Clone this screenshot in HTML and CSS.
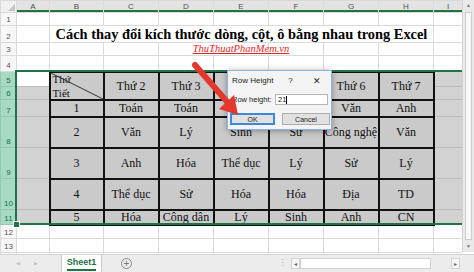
FILE: index.html
```html
<!DOCTYPE html>
<html>

<head>
  <meta charset="UTF-8">
  <meta name="viewport" content="width=device-width, initial-scale=1.0">
  <title>Row Height</title>
  <link rel="stylesheet" href="styles.css">
</head>

<body>
  <div id="excel">
    <div id="main">
      <div id="sheet">
        <table class="grid">
          <colgroup>
            <col class="c-rh">
            <col class="c-a">
            <col class="c-b">
            <col class="c-w" span="6">
            <col class="c-i">
          </colgroup>
          <tr class="r0">
            <th class="corner"><i></i></th>
            <th class="ch">A</th><th class="ch">B</th><th class="ch">C</th><th class="ch">D</th><th class="ch">E</th>
            <th class="ch">F</th><th class="ch">G</th><th class="ch">H</th><th class="ch">I</th>
          </tr>
          <tr class="r1">
            <th class="rh">1</th><td></td><td></td><td></td><td></td><td></td><td></td><td></td><td></td><td></td>
          </tr>
          <tr class="r2">
            <th class="rh">2</th><td></td>
            <td class="title" colspan="7">Cách thay đổi kích thước dòng, cột, ô bằng nhau trong Excel</td>
            <td></td>
          </tr>
          <tr class="r3">
            <th class="rh">3</th><td></td><td></td><td></td><td></td><td></td><td></td><td></td><td></td><td></td>
          </tr>
          <tr class="r4">
            <th class="rh">4</th><td></td><td></td><td></td><td></td><td></td><td></td><td></td><td></td><td></td>
          </tr>
          <tr class="r5">
            <th class="rh sel">5</th>
            <td class="act"></td>
            <td class="t diag" rowspan="2">
              <div class="diag-in">
                <span>Thứ</span><span>Tiết</span>
                <svg class="slash" viewBox="0 0 100 100" preserveAspectRatio="none"><line x1="0" y1="0" x2="100" y2="100" /></svg>
              </div>
            </td>
            <td class="t" rowspan="2">Thứ 2</td>
            <td class="t" rowspan="2">Thứ 3</td>
            <td class="t" rowspan="2"></td>
            <td class="t" rowspan="2"></td>
            <td class="t" rowspan="2">Thứ 6</td>
            <td class="t" rowspan="2">Thứ 7</td>
            <td class="s"></td>
          </tr>
          <tr class="r6">
            <th class="rh sel">6</th><td class="s"></td><td class="s"></td>
          </tr>
          <tr class="r7">
            <th class="rh sel">7</th><td class="s"></td>
            <td class="t">1</td><td class="t">Toán</td><td class="t">Toán</td><td class="t"></td><td class="t"></td><td class="t">Văn</td><td class="t">Anh</td>
            <td class="s"></td>
          </tr>
          <tr class="r8">
            <th class="rh sel">8</th><td class="s"></td>
            <td class="t">2</td><td class="t">Văn</td><td class="t">Lý</td><td class="t">Sinh</td><td class="t">Sử</td><td class="t">Công nghệ</td><td class="t">Văn</td>
            <td class="s"></td>
          </tr>
          <tr class="r9">
            <th class="rh sel">9</th><td class="s"></td>
            <td class="t">3</td><td class="t">Anh</td><td class="t">Hóa</td><td class="t">Thể dục</td><td class="t">Lý</td><td class="t">Sử</td><td class="t">Lý</td>
            <td class="s"></td>
          </tr>
          <tr class="r10">
            <th class="rh sel">10</th><td class="s"></td>
            <td class="t">4</td><td class="t">Thể dục</td><td class="t">Sử</td><td class="t">Hóa</td><td class="t">Hóa</td><td class="t">Địa</td><td class="t">TD</td>
            <td class="s"></td>
          </tr>
          <tr class="r11">
            <th class="rh sel">11</th><td class="s"></td>
            <td class="t">5</td><td class="t">Hóa</td><td class="t">Công dân</td><td class="t">Lý</td><td class="t">Sinh</td><td class="t">Anh</td><td class="t">CN</td>
            <td class="s"></td>
          </tr>
          <tr class="r12">
            <th class="rh">12</th><td></td><td></td><td></td><td></td><td></td><td></td><td></td><td></td><td></td>
          </tr>
          <tr class="r13">
            <th class="rh">13</th><td></td><td></td><td></td><td></td><td></td><td></td><td></td><td></td><td></td>
          </tr>
          <tr class="r14">
            <th class="rh"></th><td></td><td></td><td></td><td></td><td></td><td></td><td></td><td></td><td></td>
          </tr>
        </table>

        <div class="watermark">ThuThuatPhanMem.vn</div>
        <div class="selection"></div>
        <div class="handle"></div>
      </div>

      <div id="vscroll">
        <div class="sb-btn">▲</div>
        <div class="sb-track"><div class="sb-thumb"></div></div>
        <div class="sb-btn">▼</div>
      </div>
    </div>

    <div id="tabbar">
      <span class="nav first">◀</span>
      <span class="nav">▶</span>
      <div class="tab">Sheet1</div>
      <span class="add">+</span>
      <span class="dots">⋮</span>
      <div class="hscroll">
        <span class="h-btn">◂</span>
        <div class="h-thumb"></div>
        <span class="h-rest"></span>
        <span class="h-btn">▸</span>
      </div>
    </div>

    <div class="dialog">
      <div class="dlg-title">
        <span class="dlg-name">Row Height</span>
        <span class="dlg-q">?</span>
        <span class="dlg-x">✕</span>
      </div>
      <div class="dlg-row">
        <label>Row height:</label>
        <div class="dlg-input">21<i class="caret"></i></div>
      </div>
      <div class="dlg-btns">
        <button class="ok">OK</button>
        <button class="cancel">Cancel</button>
      </div>
    </div>

    <svg class="arrow" width="474" height="272" viewBox="0 0 474 272">
      <line x1="195" y1="65" x2="229" y2="104" />
      <polygon points="238,115 219,109 234,95" />
    </svg>
  </div>
</body>

</html>
```

FILE: styles.css
```css
body {
  margin: 0;
  padding: 0;
  overflow: hidden;
  background-color: #fff;
  font-family: 'Liberation Sans', Arial, sans-serif;
}

#excel {
  position: relative;
  width: 474px;
  height: 272px;
  overflow: hidden;
}

#main {
  display: flex;
  height: 254px;
}

#sheet {
  position: relative;
  width: 462px;
  height: 254px;
  overflow: hidden;
}

/* spreadsheet grid */
.grid {
  border-collapse: collapse;
  table-layout: fixed;
  width: 462px;
}

.c-rh { width: 16px; }
.c-a { width: 33px; }
.c-b { width: 54px; }
.c-w { width: 55px; }
.c-i { width: 29px; }

.grid td,
.grid th {
  border: 1px solid #dadada;
  padding: 0;
  overflow: hidden;
  white-space: nowrap;
  line-height: 10px;
}

.r0 { height: 12px; }
.r1 { height: 13px; }
.r2 { height: 17px; }
.r3 { height: 13px; }
.r4 { height: 16px; }
.r5 { height: 15px; }
.r6 { height: 13px; }
.r7 { height: 17px; }
.r8,
.r9,
.r10 { height: 31px; }
.r11 { height: 15px; }
.r12,
.r13,
.r14 { height: 14px; }

.corner {
  position: relative;
  background-color: #f0f0f0;
}

.corner i {
  position: absolute;
  right: 1px;
  bottom: 1px;
  border-left: 7px solid transparent;
  border-bottom: 7px solid #c4c4c4;
}

.ch {
  background-color: #e3e3e3;
  color: #505050;
  font-size: 8px;
  font-weight: normal;
  box-shadow: inset 0 -2px 0 #217346;
  border-color: #cfcfcf;
}

.rh {
  background-color: #f7f7f7;
  color: #555;
  font-size: 8px;
  font-weight: normal;
  vertical-align: bottom;
  text-align: center;
  border-color: #d8d8d8;
}

.rh.sel {
  background-color: #a6dbc2;
  color: #1f6b43;
  border-color: #93c9ae;
}

.grid td.s {
  background-color: #d2d2d2;
  border-color: #bdbdbd;
}

.grid td.act {
  background-color: #fff;
  border-color: #bdbdbd;
}

.title {
  font-family: 'Liberation Serif', 'Times New Roman', serif;
  font-weight: bold;
  font-size: 14.4px;
  text-align: center;
  line-height: 15px;
}

/* the timetable */
.grid td.t {
  border: 2px solid #111;
  background-color: #cacaca;
  text-align: center;
  font-family: 'Liberation Serif', 'Times New Roman', serif;
  font-size: 12px;
  line-height: 12px;
  color: #111;
}

.grid td.diag {
  padding: 0;
}

.diag-in {
  position: relative;
  display: flex;
  flex-direction: column;
  justify-content: space-between;
  align-items: flex-start;
  height: 26px;
  padding-left: 2px;
  font-size: 11px;
}

.slash {
  position: absolute;
  left: 0;
  top: 0;
  width: 100%;
  height: 100%;
}

.slash line {
  stroke: #333;
  stroke-width: 1;
  vector-effect: non-scaling-stroke;
}

.watermark {
  position: absolute;
  left: 49px;
  top: 43px;
  width: 384px;
  text-align: center;
  font-family: 'Liberation Serif', 'Times New Roman', serif;
  font-style: italic;
  font-size: 10.5px;
  color: #e3262b;
  text-decoration: underline;
}

.selection {
  position: absolute;
  left: 15px;
  top: 70px;
  width: 460px;
  height: 155px;
  border: 2px solid #217346;
  border-right: none;
  box-sizing: border-box;
}

.handle {
  position: absolute;
  left: 13px;
  top: 221px;
  width: 5px;
  height: 5px;
  background-color: #217346;
  border: 1px solid #fff;
}

/* vertical scroll bar */
#vscroll {
  width: 12px;
  height: 252px;
  display: flex;
  flex-direction: column;
  background-color: #e9e9e9;
  border-left: 1px solid #d6d6d6;
  box-sizing: border-box;
}

.sb-btn {
  height: 11px;
  font-size: 5px;
  color: #777;
  text-align: center;
  line-height: 11px;
}

.sb-track {
  flex: 1;
  padding: 1px 2px;
}

.sb-thumb {
  height: 100%;
  background-color: #f8f8f8;
  border: 1px solid #cdcdcd;
  box-sizing: border-box;
}

/* sheet tabs */
#tabbar {
  display: flex;
  align-items: stretch;
  height: 18px;
  background-color: #ececec;
  border-top: 1px solid #d4d4d4;
  box-sizing: border-box;
  font-size: 9px;
}

.nav {
  width: 9px;
  margin-left: 9px;
  color: #c2c2c2;
  font-size: 5px;
  line-height: 17px;
  text-align: center;
}

.nav.first {
  margin-left: 13px;
}

.tab {
  margin-left: 22px;
  width: 39px;
  background-color: #fff;
  color: #217346;
  font-weight: bold;
  text-align: center;
  line-height: 15px;
  box-shadow: 1px 0 0 #c8c8c8, -1px 0 0 #c8c8c8;
  position: relative;
}

.tab::after {
  content: '';
  position: absolute;
  left: 5px;
  right: 5px;
  bottom: 1px;
  height: 2px;
  background-color: #217346;
}

.add {
  margin-left: 20px;
  margin-top: 3px;
  width: 9px;
  height: 9px;
  border: 1px solid #8a8a8a;
  border-radius: 50%;
  color: #777;
  font-size: 10px;
  line-height: 9px;
  text-align: center;
}

.dots {
  margin-left: 146px;
  width: 6px;
  color: #b0b0b0;
  line-height: 17px;
}

.hscroll {
  display: flex;
  margin-left: 7px;
  width: 169px;
  padding: 3px 0;
}

.h-btn {
  width: 9px;
  font-size: 6px;
  color: #666;
  text-align: center;
  line-height: 10px;
  background-color: #f6f6f6;
  border: 1px solid #d2d2d2;
  box-sizing: border-box;
}

.h-thumb {
  width: 131px;
  background-color: #fff;
  border: 1px solid #cfcfcf;
  box-sizing: border-box;
}

.h-rest {
  flex: 1;
}

/* Row Height dialog */
.dialog {
  position: absolute;
  left: 227px;
  top: 70px;
  width: 105px;
  height: 60px;
  background-color: #f4f4f4;
  border: 1px solid #8fb2dd;
  box-sizing: border-box;
  box-shadow: 0 1px 6px rgba(0, 0, 0, 0.35);
  font-size: 8px;
  color: #222;
}

.dlg-title {
  display: flex;
  align-items: center;
  height: 19px;
  padding-left: 4px;
}

.dlg-name {
  width: 51px;
}

.dlg-q {
  width: 16px;
  text-align: center;
}

.dlg-x {
  margin-left: 5px;
  width: 28px;
  text-align: center;
  font-size: 9px;
}

.dlg-row {
  display: flex;
  align-items: center;
  margin-top: 4px;
  padding-left: 4px;
  height: 11px;
}

.dlg-row label {
  width: 43px;
  font-size: 7.5px;
}

.dlg-input {
  width: 53px;
  height: 11px;
  background-color: #fff;
  border: 1px solid #b4b4b4;
  box-sizing: border-box;
  padding-left: 2px;
  font-size: 7.5px;
  line-height: 9px;
}

.caret {
  display: inline-block;
  width: 1px;
  height: 8px;
  vertical-align: middle;
  background-color: #000;
}

.dlg-btns {
  display: flex;
  gap: 7px;
  margin-top: 8px;
  padding-left: 2px;
}

.dlg-btns button {
  height: 12px;
  padding: 0;
  background-color: #e1e1e1;
  border: 1px solid #adadad;
  font-family: 'Liberation Sans', Arial, sans-serif;
  font-size: 7px;
  color: #222;
}

.dlg-btns .ok {
  width: 45px;
  border: 2px solid #3c8ad9;
}

.dlg-btns .cancel {
  width: 48px;
}

/* red pointer drawn on the screenshot */
.arrow {
  position: absolute;
  left: 0;
  top: 0;
}

.arrow line {
  stroke: #e2382e;
  stroke-width: 6;
  stroke-linecap: round;
}

.arrow polygon {
  fill: #e2382e;
}
```
